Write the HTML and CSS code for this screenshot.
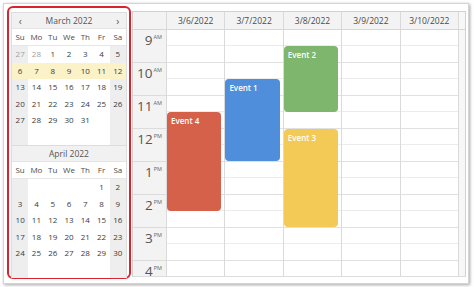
FILE: index.html
```html
<!DOCTYPE html>
<html lang="en">
  <head>
    <meta charset="UTF-8" />
    <meta name="viewport" content="width=device-width, initial-scale=1.0" />
    <title>Calendar</title>
    <link rel="stylesheet" href="styles.css">
  </head>
  <body>
    <div class="frame">
      <div class="nav">
        <div class="month">
          <div class="month-title"><span>&lsaquo;</span><span>March 2022</span><span>&rsaquo;</span></div>
          <div class="grid names">
            <span>Su</span><span>Mo</span><span>Tu</span><span>We</span><span>Th</span><span>Fr</span><span>Sa</span>
          </div>
          <div class="grid days">
            <span class="we other">27</span><span class="other">28</span><span>1</span><span>2</span><span>3</span><span>4</span><span class="we">5</span>
            <span class="sel">6</span><span class="sel">7</span><span class="sel">8</span><span class="sel">9</span><span class="sel">10</span><span class="sel">11</span><span class="sel">12</span>
            <span class="we">13</span><span>14</span><span>15</span><span>16</span><span>17</span><span>18</span><span class="we">19</span>
            <span class="we">20</span><span>21</span><span>22</span><span>23</span><span>24</span><span>25</span><span class="we">26</span>
            <span class="we">27</span><span>28</span><span>29</span><span>30</span><span>31</span><span></span><span class="we"></span>
            <span class="we"></span><span></span><span></span><span></span><span></span><span></span><span class="we"></span>
          </div>
        </div>
        <div class="month">
          <div class="month-title"><span></span><span>April 2022</span><span></span></div>
          <div class="grid names">
            <span>Su</span><span>Mo</span><span>Tu</span><span>We</span><span>Th</span><span>Fr</span><span>Sa</span>
          </div>
          <div class="grid days">
            <span class="we"></span><span></span><span></span><span></span><span></span><span>1</span><span class="we">2</span>
            <span class="we">3</span><span>4</span><span>5</span><span>6</span><span>7</span><span>8</span><span class="we">9</span>
            <span class="we">10</span><span>11</span><span>12</span><span>13</span><span>14</span><span>15</span><span class="we">16</span>
            <span class="we">17</span><span>18</span><span>19</span><span>20</span><span>21</span><span>22</span><span class="we">23</span>
            <span class="we">24</span><span>25</span><span>26</span><span>27</span><span>28</span><span>29</span><span class="we">30</span>
            <span class="we"></span><span></span><span></span><span></span><span></span><span></span><span class="we"></span>
          </div>
        </div>
      </div>

      <div class="cal">
        <div class="cal-head">
          <div class="corner"></div>
          <div class="col-title">3/6/2022</div>
          <div class="col-title">3/7/2022</div>
          <div class="col-title">3/8/2022</div>
          <div class="col-title">3/9/2022</div>
          <div class="col-title">3/10/2022</div>
          <div class="gutter"></div>
        </div>
        <div class="cal-body">
          <div class="hours">
            <div class="hour">9<sup>AM</sup></div>
            <div class="hour">10<sup>AM</sup></div>
            <div class="hour">11<sup>AM</sup></div>
            <div class="hour">12<sup>PM</sup></div>
            <div class="hour">1<sup>PM</sup></div>
            <div class="hour">2<sup>PM</sup></div>
            <div class="hour">3<sup>PM</sup></div>
            <div class="hour">4<sup>PM</sup></div>
          </div>
          <div class="day">
            <div class="event red" style="top: 82px; height: 99px">Event 4</div>
          </div>
          <div class="day">
            <div class="event blue" style="top: 49px; height: 82px">Event 1</div>
          </div>
          <div class="day">
            <div class="event green" style="top: 16px; height: 66px">Event 2</div>
            <div class="event yellow" style="top: 99px; height: 98px">Event 3</div>
          </div>
          <div class="day"></div>
          <div class="day"></div>
          <div class="gutter"></div>
        </div>
      </div>
    </div>
  </body>
</html>
```

FILE: styles.css
```css
:root {
  font-family: "Open Sans", "Noto Sans", sans-serif;
}

body {
  margin: 0;
  background-color: #fff;
  width: 474px;
  height: 287px;
  overflow: hidden;
}

.frame {
  margin: 3px 0 0 3px;
  width: 466px;
  height: 281px;
  box-sizing: border-box;
  border: 1px solid #d4d4d4;
  box-shadow: 1px 1px 3px rgba(0, 0, 0, 0.35);
  display: flex;
  padding: 2px 2px 3px 3px;
  gap: 1px;
}

/* navigator */
.nav {
  width: 124px;
  height: 273px;
  box-sizing: border-box;
  border: 2px solid #d9232e;
  border-radius: 6px;
  padding: 4px 2px 0 2px;
  display: flex;
  flex-direction: column;
}

.month {
  border-left: 1px solid #ddd;
  border-right: 1px solid #ddd;
}

.month-title {
  height: 17px;
  background-color: #f1f1f1;
  border-top: 1px solid #ddd;
  border-bottom: 1px solid #e4e4e4;
  box-sizing: border-box;
  display: grid;
  grid-template-columns: 1fr 5fr 1fr;
  align-items: center;
  text-align: center;
  font-size: 8.5px;
  color: #555;
}

.month-title span:first-child,
.month-title span:last-child {
  font-size: 10px;
  line-height: 10px;
}

.grid {
  display: grid;
  grid-template-columns: repeat(7, 1fr);
  text-align: center;
  font-size: 8px;
  color: #3a3a3a;
}

.names {
  height: 16px;
  line-height: 16px;
  color: #4a4a4a;
  border-bottom: 1px solid #e6e6e6;
}

.days span {
  height: 16.5px;
  line-height: 16.5px;
  background-color: #fff;
}

.days .we {
  background-color: #eeeeee;
}

.days .sel {
  background-color: #fcf2c8;
}

.days .other {
  color: #a0a0a0;
}

/* calendar */
.cal {
  width: 334px;
  margin-top: 5px;
  height: 266px;
  box-sizing: border-box;
  border-left: 1px solid #d0d0d0;
  border-right: 1px solid #d0d0d0;
  border-top: 1px solid #d0d0d0;
  border-bottom: 1px solid #dcdcdc;
  display: flex;
  flex-direction: column;
}

.cal-head,
.cal-body {
  display: grid;
  grid-template-columns: 33px repeat(5, 1fr) 7px;
}

.cal-head {
  height: 18px;
  background-color: #f3f3f3;
  border-bottom: 1px solid #d6d6d6;
  box-sizing: border-box;
}

.col-title {
  border-left: 1px solid #dadada;
  font-size: 8.5px;
  color: #4a4a4a;
  text-align: center;
  line-height: 17px;
}

.gutter {
  border-left: 1px solid #dadada;
  background-color: #f7f7f7;
}

.cal-body {
  flex: 1;
  overflow: hidden;
}

.hours {
  background-color: #f3f3f3;
}

.hour {
  height: 33px;
  box-sizing: border-box;
  border-bottom: 1px solid #dcdcdc;
  text-align: right;
  padding: 4px 4px 0 0;
  font-size: 13.5px;
  line-height: 13px;
  color: #555;
}

.hour sup {
  font-size: 5.5px;
  line-height: 5px;
  vertical-align: 6px;
  margin-left: 1px;
  color: #666;
}

.day {
  position: relative;
  border-left: 1px solid #dadada;
  background-image: repeating-linear-gradient(
    to bottom,
    transparent 0,
    transparent 15.5px,
    #ececec 15.5px,
    #ececec 16.5px,
    transparent 16.5px,
    transparent 32px,
    #e0e0e0 32px,
    #e0e0e0 33px
  );
}

.event {
  position: absolute;
  left: 0;
  right: 3px;
  border-radius: 4px;
  color: #fff;
  font-size: 8px;
  font-weight: 600;
  padding: 3px 4px;
  box-sizing: border-box;
}

.red {
  background-color: #d6614a;
}

.blue {
  background-color: #4f8edb;
}

.green {
  background-color: #7db66c;
}

.yellow {
  background-color: #f2ca55;
}
```
